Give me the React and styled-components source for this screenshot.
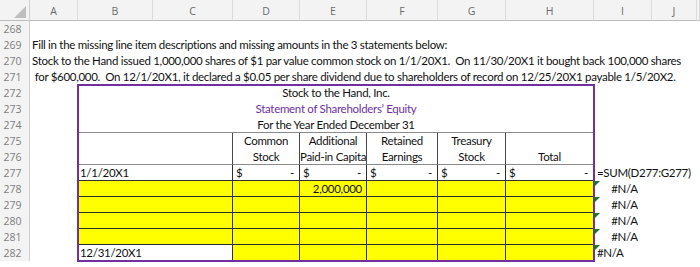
import React from 'react'
import styled, { createGlobalStyle } from 'styled-components'

const COLS = ['A', 'B', 'C', 'D', 'E', 'F', 'G', 'H', 'I', 'J']
const ROWS = [268, 269, 270, 271, 272, 273, 274, 275, 276, 277, 278, 279, 280, 281, 282]

const NOTES = [
    { row: 3, text: 'Fill in the missing line item descriptions and missing amounts in the 3 statements below:' },
    { row: 4, text: 'Stock to the Hand issued 1,000,000 shares of $1 par value common stock on 1/1/20X1.  On 11/30/20X1 it bought back 100,000 shares' },
    { row: 5, text: ' for $600,000.  On 12/1/20X1, it declared a $0.05 per share dividend due to shareholders of record on 12/25/20X1 payable 1/5/20X2.' },
]

const HEADS = [
    ['Common', 'Stock'],
    ['Additional', 'Paid-in Capital'],
    ['Retained', 'Earnings'],
    ['Treasury', 'Stock'],
    ['', 'Total'],
]

const GlobalStyle = createGlobalStyle`
    body {
        margin: 0;
        background: #fff;
    }
`

const Sheet = styled.div`
    display: grid;
    grid-template-columns: 30px 48px 75px 80px 67px 67px 71px 68px 88px 58px 45px 1fr;
    grid-template-rows: 21px repeat(15, 16px) 1fr;
    width: 700px;
    height: 267px;
    overflow: hidden;
    font-family: Lato, "Liberation Sans", sans-serif;
    font-size: 11.5px;
    letter-spacing: -0.3px;
    color: #111;
`

const Corner = styled.div`
    background: #f3f3f3;
    border-right: 1px solid #cfcfcf;
    border-bottom: 1px solid #bdbdbd;
    display: flex;
    align-items: flex-end;
    justify-content: flex-end;
    padding: 0 3px 2px 0;
`

const ColHead = styled.div`
    background: #f3f3f3;
    border-right: 1px solid #dcdcdc;
    border-bottom: 1px solid #bdbdbd;
    display: flex;
    align-items: flex-end;
    justify-content: center;
    padding-bottom: 2px;
    font-family: "Open Sans", sans-serif;
    font-size: 10.5px;
    letter-spacing: 0;
    color: #6a6a6a;
`

const RowHead = styled.div`
    grid-column: 1;
    grid-row: ${p => p.$row};
    background: #f3f3f3;
    border-right: 1px solid #cfcfcf;
    display: flex;
    align-items: center;
    justify-content: center;
    padding-right: 4px;
    font-family: "Open Sans", sans-serif;
    font-size: 10.5px;
    letter-spacing: 0;
    color: #7d7d7d;
`

const Note = styled.div`
    grid-column: 2 / -1;
    grid-row: ${p => p.$row};
    white-space: pre;
    line-height: 16px;
    padding-left: 2px;
`

const Statement = styled.div`
    grid-column: 3 / 10;
    grid-row: 6 / 17;
    position: relative;
    display: grid;
    grid-template-columns: 155px 67px 67px 71px 68px 88px;
    grid-template-rows: repeat(11, 16px);
    line-height: 16px;

    &::after {
        content: '';
        position: absolute;
        inset: -1px;
        border: 2px solid #7030a0;
        pointer-events: none;
    }
`

const Title = styled.div`
    grid-column: 1 / -1;
    text-align: center;
    color: ${p => p.$tone || '#111'};
    border-bottom: ${p => (p.$rule ? '1px solid #8a8a8a' : 'none')};
`

const HeadCell = styled.div`
    grid-row: span 2;
    display: flex;
    flex-direction: column;
    border-right: 1px solid #4a4a4a;
    border-bottom: 1px solid #8a8a8a;
    overflow: hidden;
`

const HeadLine = styled.span`
    display: block;
    height: 16px;
    text-align: center;
    white-space: nowrap;
    overflow: hidden;
`

const Cell = styled.div`
    background: ${p => (p.$fill ? '#ffff00' : '#fff')};
    border-right: 1px solid #2e2e2e;
    border-bottom: 1px solid #2e2e2e;
    padding: 0 4px 0 2px;
    white-space: nowrap;
    overflow: hidden;
    text-align: ${p => (p.$num ? 'right' : 'left')};
`

const Money = styled(Cell)`
    display: flex;
    justify-content: space-between;
    padding: 0 5px 0 3px;
`

const Aside = styled.div`
    grid-column: 10;
    grid-row: ${p => p.$row};
    position: relative;
    white-space: nowrap;
    line-height: 16px;
    padding-left: 3px;
    text-align: ${p => (p.$center ? 'center' : 'left')};
`

const ErrorFlag = styled.span`
    position: absolute;
    left: 0;
    top: 0;
    width: 0;
    height: 0;
    border-top: 6px solid #1e7145;
    border-right: 6px solid transparent;
`

const FillRow = ({ amount }) => (
    <>
        {[0, 1, 2, 3, 4, 5].map(i => (
            <Cell key={i} $fill $num={i === 2}>{i === 2 ? amount : ''}</Cell>
        ))}
    </>
)

const App = () => {
    return (
        <>
            <GlobalStyle />
            <Sheet>
                <Corner>
                    <svg width="12" height="12" viewBox="0 0 12 12">
                        <polygon points="12,0 12,12 0,12" fill="#bfbfbf" />
                    </svg>
                </Corner>
                {COLS.map(c => <ColHead key={c}>{c}</ColHead>)}
                <ColHead />
                {ROWS.map((n, i) => <RowHead key={n} $row={i + 2}>{n}</RowHead>)}
                {NOTES.map(n => <Note key={n.row} $row={n.row}>{n.text}</Note>)}

                <Statement>
                    <Title>Stock to the Hand, Inc.</Title>
                    <Title $tone="#7030a0">Statement of Shareholders’ Equity</Title>
                    <Title $rule>For the Year Ended December 31</Title>

                    <HeadCell />
                    {HEADS.map(([a, b], i) => (
                        <HeadCell key={i}>
                            <HeadLine>{a}</HeadLine>
                            <HeadLine>{b}</HeadLine>
                        </HeadCell>
                    ))}

                    <Cell>1/1/20X1</Cell>
                    {[0, 1, 2, 3, 4].map(i => (
                        <Money key={i}><span>$</span><span>-</span></Money>
                    ))}

                    <FillRow amount="2,000,000" />
                    <FillRow />
                    <FillRow />
                    <FillRow />

                    <Cell>12/31/20X1</Cell>
                    {[0, 1, 2, 3, 4].map(i => <Cell key={i} $fill />)}
                </Statement>

                <Aside $row={11}>=SUM(D277:G277)</Aside>
                {[12, 13, 14, 15].map(r => (
                    <Aside key={r} $row={r} $center><ErrorFlag />#N/A</Aside>
                ))}
                <Aside $row={16}><ErrorFlag />#N/A</Aside>
            </Sheet>
        </>
    )
}

export default App
